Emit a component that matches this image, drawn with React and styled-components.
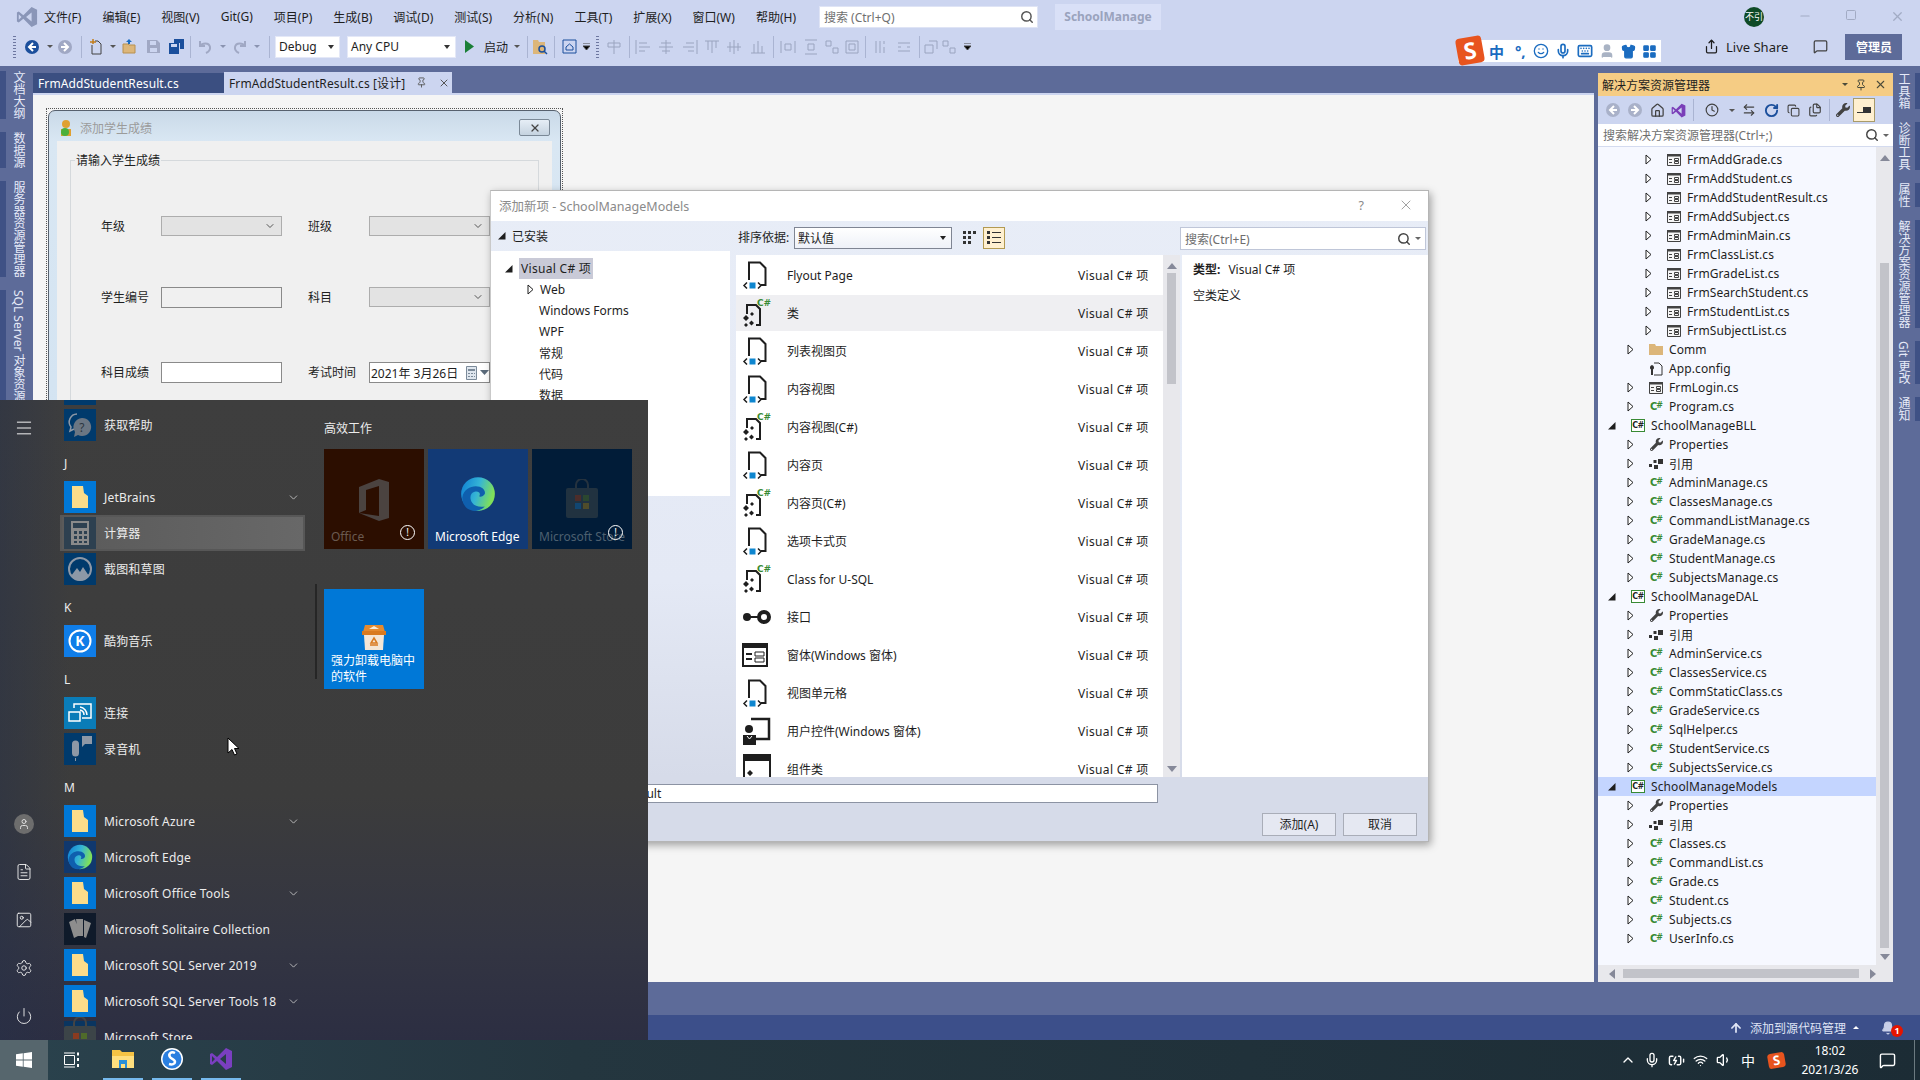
import React from 'react';
import styled, { createGlobalStyle } from 'styled-components';
import { ChevronDown, Search, Smile, Mic, Keyboard, Shirt, LayoutGrid, User, Home, RotateCw, Copy, Files, Clock, ArrowLeftRight, Share, MessageSquare, Menu, FileText, Image, Settings, Power, Volume1, Wifi, BatteryCharging, ChevronUp, Bell, ArrowUp, Pin, X, Minus, Square } from 'lucide-react';
import { FaWrench } from 'react-icons/fa';

const FONT = '"Noto Sans", "Noto Sans CJK SC", sans-serif';

const GlobalStyle = createGlobalStyle`
    html, body { margin: 0; padding: 0; background: #5d6b99; }
    * { box-sizing: border-box; }
    body { font-family: ${FONT}; font-size: 12px; color: #1e1e1e; }
`;

const Screen = styled.div`
    position: relative;
    width: 1920px;
    height: 1080px;
    overflow: hidden;
    display: flex;
    flex-direction: column;
    background: #5d6b99;
`;

/* top chrome */
const TitleBar = styled.div`
    height: 33px;
    background: #ccd5f0;
    display: flex;
    align-items: center;
    padding-left: 16px;
`;
const VsMark = styled.div`
    width: 28px;
    display: flex;
`;
const MenuItem = styled.span`
    margin-right: 21px;
    color: #1e1e1e;
    white-space: nowrap;
`;
const QuickSearch = styled.div`
    width: 219px;
    height: 22px;
    margin-left: 2px;
    background: #fff;
    border: 1px solid #dfe4f5;
    color: #6f6f6f;
    display: flex;
    align-items: center;
    justify-content: space-between;
    padding: 0 3px 0 4px;
`;
const SolutionBadge = styled.div`
    width: 106px;
    height: 26px;
    margin-left: 17px;
    background: #d9e0f7;
    color: #9aa3bd;
    font-weight: 700;
    display: flex;
    align-items: center;
    justify-content: center;
`;
const Avatar = styled.div`
    width: 20px;
    height: 20px;
    margin-left: 583px;
    border-radius: 50%;
    background: #0e4a26;
    color: #fff;
    font-size: 9px;
    line-height: 20px;
    text-align: center;
`;
const WindowButtons = styled.div`
    margin-left: 34px;
    display: flex;
    gap: 33px;
    color: #a2abc4;
`;
const Toolbar = styled.div`
    height: 33px;
    background: #ccd5f0;
    display: flex;
    align-items: center;
    padding: 0 0 6px 8px;
`;
const Slot = styled.div`
    width: ${(p) => p.$w}px;
    margin-left: ${(p) => p.$ml || 0}px;
    flex: none;
    height: 22px;
    display: flex;
    align-items: center;
    justify-content: center;
    color: ${(p) => p.$color || '#424242'};
`;
const Sep = styled.div`
    width: ${(p) => p.$w || 10}px;
    flex: none;
    height: 22px;
    display: flex;
    justify-content: center;
    &::after {
        content: '';
        width: 1px;
        background: #aab4d2;
    }
`;
const Grip = styled.div`
    width: ${(p) => p.$w || 12}px;
    flex: none;
    height: 22px;
    display: flex;
    justify-content: center;
    &::after {
        content: '';
        width: 3px;
        background: repeating-linear-gradient(180deg, #6d77a0 0 1px, transparent 1px 3px);
    }
`;
const ToolSelect = styled.div`
    width: ${(p) => p.$w}px;
    margin-right: ${(p) => p.$mr || 0}px;
    flex: none;
    height: 22px;
    background: #fff;
    border: 1px solid #e4e8f7;
    display: flex;
    align-items: center;
    justify-content: space-between;
    padding: 0 5px 0 3px;
    &::after {
        content: '';
        border: 3px solid transparent;
        border-top: 4px solid #333;
        border-bottom: 0;
    }
`;
const Caret = styled.span`
    display: inline-block;
    border: 3px solid transparent;
    border-top: 3px solid ${(p) => p.$color || '#555'};
    border-bottom: 0;
    ${(p) => p.$up && 'transform: rotate(180deg);'}
`;
const ImeBar = styled.div`
    width: 205px;
    height: 24px;
    margin: 9px 0 0 481px;
    flex: none;
    position: relative;
    background: #fff;
    border: 1px solid #cdd6ef;
    display: flex;
    align-items: center;
    padding-left: 31px;
    color: #1b6cc0;
    gap: 6px;
`;
const ImeLogo = styled.div`
    position: absolute;
    left: -1px;
    top: -3px;
    width: 26px;
    height: 27px;
    background: #e8541e;
    border-radius: 4px;
    transform: rotate(-10deg);
    color: #fff;
    font-size: 23px;
    font-weight: 700;
    line-height: 26px;
    text-align: center;
`;
const ImeText = styled.span`
    font-size: 15px;
    font-weight: 700;
    width: ${(p) => p.$w || 'auto'};
`;
const LiveShare = styled.div`
    margin-left: 42px;
    display: flex;
    align-items: center;
    gap: 7px;
    color: #1e1e1e;
    font-size: 13px;
    white-space: nowrap;
`;
const AdminButton = styled.div`
    width: 57px;
    height: 26px;
    margin-left: 15px;
    background: #5d6b99;
    color: #fff;
    font-weight: 700;
    display: flex;
    align-items: center;
    justify-content: center;
`;

/* workspace */
const Workspace = styled.div`
    height: 949px;
    display: flex;
`;
const LeftRail = styled.div`
    width: 33px;
    flex: none;
    padding-top: 5px;
    display: flex;
    flex-direction: column;
    gap: 13px;
`;
const RailLabel = styled.div`
    writing-mode: vertical-rl;
    line-height: 12px;
    color: #e6eaf8;
    white-space: nowrap;
    border-left: 6px solid #3f5185;
    padding-left: 6px;
    width: 24px;
`;
const DocColumn = styled.div`
    width: 1561px;
    flex: none;
    height: 916px;
    display: flex;
    flex-direction: column;
`;
const TabStrip = styled.div`
    height: 29px;
    padding-top: 6px;
    border-bottom: 2px solid #ccd5f0;
    display: flex;
    align-items: flex-end;
`;
const DocTab = styled.div`
    height: ${(p) => (p.$active ? 21 : 20)}px;
    width: ${(p) => (p.$active ? 228 : 191)}px;
    background: ${(p) => (p.$active ? '#ccd5f0' : '#3b4f81')};
    color: ${(p) => (p.$active ? '#1e1e1e' : '#fff')};
    display: flex;
    align-items: center;
    padding-left: 5px;
    gap: 11px;
    white-space: nowrap;
    letter-spacing: 0.1px;
`;
const DocArea = styled.div`
    flex: 1;
    position: relative;
    background: #f5f5f5;
`;
const DesignerFrame = styled.div`
    position: absolute;
    left: 13px;
    top: 13px;
    width: 517px;
    height: 520px;
    border: 1px dotted #555;
    padding: 1px;
`;
const FormWindow = styled.div`
    height: 100%;
    border: 1px solid #57616e;
    border-radius: 7px 7px 0 0;
    background: linear-gradient(180deg, #c9d9e8 0, #d9e7f3 30px, #cfe1f1 100%);
    display: flex;
    flex-direction: column;
    padding: 0 8px;
`;
const FormTitle = styled.div`
    height: 30px;
    display: flex;
    align-items: center;
    padding: 3px 0 0 3px;
    gap: 8px;
    color: #9b9b9b;
`;
const FormClose = styled.div`
    width: 31px;
    height: 17px;
    margin-left: auto;
    margin-right: 2px;
    border: 1px solid #7b8997;
    border-radius: 2px;
    background: linear-gradient(180deg, #e6eef6, #c5d3e0);
    display: flex;
    align-items: center;
    justify-content: center;
    color: #444;
`;
const FormClient = styled.div`
    flex: 1;
    background: #f0f0f0;
    padding: 19px 13px 0;
`;
const GroupBox = styled.div`
    position: relative;
    height: 300px;
    border: 1px solid #d5d9dc;
    padding: 55px 0 0 30px;
    display: grid;
    grid-template-columns: 60px 121px 26px 61px 121px;
    grid-template-rows: 71px 75px 21px;
    align-content: start;
`;
const GroupLegend = styled.span`
    position: absolute;
    left: 4px;
    top: -10px;
    padding: 0 1px;
    background: #f0f0f0;
    white-space: nowrap;
`;
const FieldLabel = styled.span`
    line-height: 21px;
    height: 21px;
    white-space: nowrap;
`;
const ComboBox = styled.div`
    height: 20px;
    background: #e3e3e3;
    border: 1px solid #adadad;
    display: flex;
    align-items: center;
    justify-content: flex-end;
    padding-right: 5px;
    color: #555;
`;
const TextBox = styled.div`
    height: 21px;
    background: ${(p) => p.$bg || '#fff'};
    border: 1px solid #8a8a8a;
    display: flex;
    align-items: center;
    white-space: nowrap;
    gap: 8px;
    padding-left: 1px;
`;
const DateButton = styled.span`
    display: flex;
    align-items: center;
    gap: 3px;
`;

/* solution explorer */
const Panel = styled.div`
    width: 295px;
    flex: none;
    height: 909px;
    margin: 7px 0 0 4px;
    display: flex;
    flex-direction: column;
    background: #f6f8ff;
`;
const PanelTitle = styled.div`
    height: 23px;
    background: #f5cc84;
    display: flex;
    align-items: center;
    padding: 0 6px 0 4px;
    color: #1e1e1e;
`;
const PanelTitleButtons = styled.div`
    margin-left: auto;
    display: flex;
    align-items: center;
    gap: 7px;
    color: #4b4b3a;
`;
const PanelTools = styled.div`
    height: 28px;
    background: #ccd5f0;
    display: flex;
    align-items: center;
    padding-left: 5px;
`;
const ActiveTool = styled.div`
    width: 22px;
    height: 24px;
    background: #fff0d0;
    border: 1px solid #a89b6a;
    display: flex;
    align-items: center;
    justify-content: center;
`;
const PanelSearch = styled.div`
    height: 23px;
    background: #fff;
    border-bottom: 1px solid #d4dbef;
    color: #6f6f6f;
    display: flex;
    align-items: center;
    justify-content: space-between;
    padding: 0 4px 0 5px;
`;
const SearchTail = styled.span`
    display: flex;
    align-items: center;
    gap: 4px;
`;
const TreeFrame = styled.div`
    height: 818px;
    display: flex;
`;
const TreeRows = styled.div`
    flex: 1;
    padding-top: 3px;
    overflow: hidden;
`;
const TreeRow = styled.div`
    height: 19px;
    display: flex;
    align-items: center;
    padding-left: ${(p) => 9 + p.$level * 18}px;
    background: ${(p) => (p.$selected ? '#c4d5ff' : 'transparent')};
    color: #1e1e1e;
    white-space: nowrap;
    letter-spacing: 0.1px;
`;
const Expander = styled.span`
    width: 10px;
    flex: none;
    display: flex;
    justify-content: center;
`;
const TreeIcon = styled.span`
    width: 16px;
    margin: 0 5px 0 13px;
    flex: none;
    display: flex;
    justify-content: center;
    align-items: center;
`;
const CsMark = styled.span`
    font-size: 10px;
    font-weight: 700;
    line-height: 10px;
    color: #388a34;
    font-family: "DejaVu Sans", sans-serif;
    letter-spacing: -1px;
    & > i {
        font-style: normal;
        font-size: 8px;
        vertical-align: 2px;
    }
`;
const ProjectMark = styled.span`
    width: 14px;
    height: 13px;
    border: 1px solid #388a34;
    background: #fff;
    color: #222;
    font-size: 8px;
    font-weight: 700;
    line-height: 11px;
    text-align: center;
    font-family: "DejaVu Sans", sans-serif;
    letter-spacing: -0.5px;
`;
const VScroll = styled.div`
    width: 17px;
    flex: none;
    background: #e8e8ec;
    display: flex;
    flex-direction: column;
    align-items: center;
    padding-top: 2px;
`;
const ScrollArrow = styled.div`
    height: 17px;
    flex: none;
    display: flex;
    align-items: center;
    justify-content: center;
    &::after {
        content: '';
        border: 5px solid transparent;
        ${(p) => (p.$down ? 'border-top: 6px solid #868999; border-bottom: 0;' : 'border-bottom: 6px solid #868999; border-top: 0;')}
    }
`;
const ScrollThumb = styled.div`
    width: 9px;
    flex: none;
    margin-top: ${(p) => p.$top}px;
    height: ${(p) => p.$h}px;
    margin-bottom: auto;
    background: #c2c3c9;
`;
const HScroll = styled.div`
    height: 17px;
    flex: none;
    background: #e8e8ec;
    display: flex;
    align-items: center;
    padding-left: 9px;
`;
const HArrow = styled.div`
    width: 8px;
    border: 5px solid transparent;
    ${(p) => (p.$right ? 'border-left: 6px solid #868999; border-right: 0; margin-left: 11px;' : 'border-right: 6px solid #868999; border-left: 0; margin-right: 8px;')}
`;
const HThumb = styled.div`
    width: 236px;
    height: 9px;
    background: #c2c3c9;
`;
const RightRail = styled.div`
    width: 27px;
    flex: none;
    padding-top: 7px;
    display: flex;
    flex-direction: column;
    gap: 13px;
`;
const RightRailLabel = styled(RailLabel)`
    border-left: 0;
    border-right: 5px solid #3f5185;
    padding-left: 4px;
    padding-right: 6px;
    width: 27px;
`;

const StatusBar = styled.div`
    height: 25px;
    background: #3c4f8a;
    color: #dfe4f5;
    display: flex;
    align-items: center;
    justify-content: flex-end;
    padding-right: 18px;
    gap: 7px;
`;
const BellWrap = styled.div`
    position: relative;
    width: 28px;
    margin-left: 8px;
    display: flex;
    justify-content: center;
    color: #c9d0e8;
`;
const BellBadge = styled.span`
    position: absolute;
    left: 17px;
    top: 4px;
    width: 12px;
    height: 12px;
    border-radius: 50%;
    background: #e51400;
    color: #fff;
    font-size: 9px;
    font-weight: 700;
    line-height: 12px;
    text-align: center;
`;

/* taskbar */
const Taskbar = styled.div`
    height: 40px;
    position: relative;
    z-index: 5;
    background: linear-gradient(90deg, #2a424d 0, #24363f 30%, #1c2c35 100%);
    display: flex;
    align-items: stretch;
    color: #fff;
`;
const StartButton = styled.div`
    width: 48px;
    background: #56666d;
    display: flex;
    align-items: center;
    justify-content: center;
`;
const TaskSlot = styled.div`
    width: ${(p) => p.$w || 40}px;
    margin-right: ${(p) => p.$mr || 0}px;
    display: flex;
    align-items: center;
    justify-content: center;
    border-bottom: ${(p) => (p.$open ? '2px solid #76b9ed' : '0')};
`;
const Tray = styled.div`
    margin-left: auto;
    display: flex;
    align-items: center;
`;
const TraySlot = styled.div`
    width: ${(p) => p.$w || 24}px;
    display: flex;
    align-items: center;
    justify-content: center;
    color: #fff;
    font-size: ${(p) => p.$size || 12}px;
`;
const TrayClock = styled.div`
    width: 76px;
    text-align: center;
    line-height: 19px;
    color: #fff;
`;
const ShowDesktop = styled.div`
    width: 14px;
    height: 100%;
    display: flex;
    justify-content: flex-end;
    padding-right: 5px;
    &::after {
        content: '';
        width: 1px;
        background: #6c7a80;
    }
`;
const SogouTray = styled.div`
    width: 17px;
    height: 15px;
    background: #e8541e;
    border-radius: 3px;
    transform: rotate(-10deg);
    color: #fff;
    font-size: 13px;
    font-weight: 700;
    line-height: 15px;
    text-align: center;
`;

/* add item dialog */
const Dialog = styled.div`
    position: absolute;
    left: 490px;
    top: 190px;
    z-index: 2;
    width: 939px;
    height: 652px;
    display: flex;
    flex-direction: column;
    background: linear-gradient(180deg, #e8edf7 0, #e4e9f5 60%, #d6dbe9 90%);
    border: 1px solid #b5b5b5;
    border-left: 1px solid #c9c9c9;
    box-shadow: 2px 3px 8px rgba(0, 0, 0, 0.35);
`;
const DialogTitle = styled.div`
    height: 30px;
    flex: none;
    background: #fff;
    display: flex;
    align-items: center;
    padding: 0 14px 2px 8px;
    color: #8a8a8a;
    font-size: 12.5px;
`;
const DialogClose = styled.div`
    margin-left: auto;
    display: flex;
    align-items: center;
    gap: 34px;
    color: #8a8a8a;
`;
const DialogBody = styled.div`
    height: 556px;
    flex: none;
    display: flex;
`;
const LeftCol = styled.div`
    width: 245px;
    flex: none;
`;
const InstalledHead = styled.div`
    height: 30px;
    display: flex;
    align-items: center;
    padding-left: 7px;
    gap: 6px;
`;
const TemplateTree = styled.div`
    width: 239px;
    height: 245px;
    background: #fff;
    padding-top: 7px;
`;
const TemplateRow = styled.div`
    height: 21px;
    display: flex;
    align-items: center;
    padding-left: ${(p) => p.$pad}px;
    gap: ${(p) => p.$gap || 7}px;
    white-space: nowrap;
`;
const TemplateActive = styled.span`
    height: 21px;
    line-height: 21px;
    padding: 0 2px;
    background: #c9cad7;
    letter-spacing: 0.3px;
`;
const MidCol = styled.div`
    width: 444px;
    flex: none;
    display: flex;
    flex-direction: column;
`;
const SortBar = styled.div`
    height: 34px;
    flex: none;
    display: flex;
    align-items: flex-start;
    padding: 6px 0 0 2px;
`;
const SortLabel = styled.span`
    line-height: 22px;
    width: 56px;
    white-space: nowrap;
`;
const SortSelect = styled.div`
    width: 158px;
    height: 22px;
    background: linear-gradient(180deg, #fff, #eef1f8);
    border: 1px solid #7f8593;
    display: flex;
    align-items: center;
    justify-content: space-between;
    padding: 0 5px 0 3px;
    &::after {
        content: '';
        border: 3px solid transparent;
        border-top: 4px solid #222;
        border-bottom: 0;
    }
`;
const ViewToggle = styled.div`
    width: 22px;
    height: 22px;
    margin-left: ${(p) => p.$ml}px;
    display: flex;
    align-items: center;
    justify-content: center;
    background: ${(p) => (p.$on ? '#fff0d0' : 'transparent')};
    border: ${(p) => (p.$on ? '1px solid #b39a52' : '0')};
`;
const ListWrap = styled.div`
    flex: 1;
    display: flex;
    min-height: 0;
`;
const ItemList = styled.div`
    flex: 1;
    background: #fff;
    overflow: hidden;
    padding: 2px 0 0;
`;
const ItemRow = styled.div`
    height: 36px;
    margin-bottom: 2px;
    flex: none;
    display: flex;
    align-items: center;
    padding-left: 6px;
    background: ${(p) => (p.$active ? '#efeff2' : 'transparent')};
    white-space: nowrap;
`;
const ItemIcon = styled.span`
    width: 30px;
    margin-right: 15px;
    flex: none;
    display: flex;
`;
const ItemKind = styled.span`
    margin-left: auto;
    width: 85px;
    letter-spacing: 0.35px;
`;
const RightCol = styled.div`
    flex: 1;
    display: flex;
    flex-direction: column;
`;
const ItemSearch = styled.div`
    width: 246px;
    height: 23px;
    margin: 6px 0 5px;
    background: #fff;
    border: 1px solid #bfc6d8;
    color: #6d6d6d;
    display: flex;
    align-items: center;
    justify-content: space-between;
    padding: 0 4px;
`;
const DetailPane = styled.div`
    flex: 1;
    background: #fff;
    margin-left: 2px;
    padding: 2px 11px;
    line-height: 26px;
`;
const DetailLabel = styled.b`
    font-weight: 700;
    margin-right: 8px;
`;
const DialogFooter = styled.div`
    flex: 1;
    padding: 7px 11px 0 70px;
    display: flex;
    flex-direction: column;
`;
const NameInput = styled.div`
    width: 597px;
    height: 19px;
    background: #fff;
    border: 1px solid #8c93a3;
    line-height: 17px;
    padding-left: 58px;
`;
const DialogActions = styled.div`
    margin-top: 10px;
    display: flex;
    justify-content: flex-end;
    gap: 7px;
`;
const DialogButton = styled.div`
    width: 74px;
    height: 23px;
    background: #e5e8f2;
    border: 1px solid #a9adb8;
    line-height: 21px;
    text-align: center;
`;

/* start menu */
const StartMenu = styled.div`
    position: absolute;
    left: 0;
    top: 400px;
    z-index: 4;
    width: 648px;
    height: 640px;
    display: flex;
    overflow: hidden;
    color: #ececec;
    background: linear-gradient(90deg, rgba(38, 48, 72, 0.45) 0, rgba(38, 48, 72, 0) 70px),
        linear-gradient(180deg, #3e3e3e 0, #3c3c3c 62%, #333542 85%, #2c2e42 100%);
`;
const MenuRail = styled.div`
    width: 48px;
    flex: none;
    display: flex;
    flex-direction: column;
    justify-content: space-between;
    padding-top: 4px;
`;
const RailGroup = styled.div`
    display: flex;
    flex-direction: column;
`;
const RailButton = styled.div`
    width: 48px;
    height: 48px;
    display: flex;
    align-items: center;
    justify-content: center;
    color: #f2f2f2;
`;
const RailAvatar = styled.div`
    width: 20px;
    height: 20px;
    border-radius: 50%;
    background: #6d6d6d;
    display: flex;
    align-items: center;
    justify-content: center;
    color: #ddd;
`;
const AppList = styled.div`
    width: 245px;
    flex: none;
    margin: -29px 0 0 12px;
`;
const AppHeading = styled.div`
    height: 36px;
    line-height: 36px;
    padding: 3px 0 0 4px;
    font-size: 12px;
`;
const AppRow = styled.div`
    height: 36px;
    display: flex;
    align-items: center;
    padding: 0 5px 0 4px;
    gap: 8px;
    white-space: nowrap;
    letter-spacing: 0.18px;
    background: ${(p) => (p.$active ? 'linear-gradient(90deg, #5a5a5a, #686868)' : 'transparent')};
    box-shadow: ${(p) => (p.$active ? 'inset 0 0 0 2px #575757' : 'none')};
`;
const AppIcon = styled.div`
    width: 32px;
    height: 32px;
    flex: none;
    background: ${(p) => p.$bg};
    display: flex;
    align-items: center;
    justify-content: center;
`;
const AppChevron = styled.span`
    margin-left: auto;
    display: flex;
    color: #cfcfcf;
`;
const TilePane = styled.div`
    position: relative;
    padding: 20px 0 0 19px;
`;
const TileHeading = styled.div`
    height: 18px;
    line-height: 18px;
    margin-bottom: 11px;
`;
const TileGrid = styled.div`
    display: grid;
    grid-template-columns: repeat(3, 100px);
    gap: 4px;
    margin-bottom: 40px;
`;
const Tile = styled.div`
    position: relative;
    width: 100px;
    height: 100px;
    background: ${(p) => p.$bg};
    color: ${(p) => p.$color || '#fff'};
    display: flex;
    flex-direction: column;
    align-items: center;
    padding-top: ${(p) => p.$top || 30}px;
`;
const TileLabel = styled.span`
    position: absolute;
    left: 7px;
    bottom: ${(p) => p.$bottom || 4}px;
    right: 6px;
    line-height: 16px;
    white-space: ${(p) => (p.$wrap ? 'normal' : 'nowrap')};
`;
const TileAlert = styled.span`
    position: absolute;
    right: 9px;
    bottom: 9px;
    width: 15px;
    height: 15px;
    border: 1px solid #fff;
    border-radius: 50%;
    color: #fff;
    font-size: 10px;
    line-height: 13px;
    text-align: center;
`;
const ScrollLine = styled.div`
    position: absolute;
    left: 10px;
    top: 184px;
    width: 2px;
    height: 95px;
    background: #262626;
`;
const Cursor = styled.svg`
    position: absolute;
    left: 227px;
    top: 737px;
    z-index: 6;
`;

/* drawn icons */
const HollowArrow = () => (
    <svg width="7" height="11" viewBox="0 0 7 11"><path d="M1 1l5 4.500L1 10z" fill="#fff" stroke="#1e1e1e" /></svg>
);
const OpenArrow = () => (
    <svg width="8" height="8" viewBox="0 0 8 8"><path d="M0 7.500L7.500 0v7.500z" fill="#1e1e1e" /></svg>
);
const FormGlyph = () => (
    <svg width="14" height="12" viewBox="0 0 14 12">
        <path d="M.5.5h13v11H.5z" fill="#f6f6f6" stroke="#424242" />
        <path d="M0 0h14v2.500H0zM2 5h3v1H2zM2 8h3v1H2z" fill="#424242" />
        <path d="M7.500 4.500h4v2h-4zM7.500 7.500h4v2h-4z" fill="none" stroke="#424242" />
    </svg>
);
const FolderGlyph = () => (
    <svg width="14" height="11" viewBox="0 0 14 11"><path d="M0 0h6l1 2h7v9H0z" fill="#dcb67a" /></svg>
);
const ConfigGlyph = () => (
    <svg width="14" height="14" viewBox="0 0 14 14" fill="none">
        <path d="M5 1h5l3 3v9H5" stroke="#333" />
        <path d="M3 3a2.500 2.500 0 0 0-1 4.500V13h2V7.500A2.500 2.500 0 0 0 3 3z" fill="#333" />
    </svg>
);
const RefGlyph = () => (
    <svg width="14" height="10" viewBox="0 0 14 10" fill="#333">
        <path d="M0 5h3v3H0zM5 6h4v4H5zM4.500 1h3v3h-3zM9 0h5v5H9z" />
    </svg>
);
const TREE_ICONS = {
    form: <FormGlyph />,
    cs: <CsMark>C<i>#</i></CsMark>,
    project: <ProjectMark>C#</ProjectMark>,
    folder: <FolderGlyph />,
    config: <ConfigGlyph />,
    wrench: <FaWrench size={13} color="#424242" />,
    ref: <RefGlyph />,
};
const PageGlyph = () => (
    <svg width="28" height="28" viewBox="0 0 28 28" fill="none">
        <path d="M7 19V1.500h11l5.500 5.500v17H19" stroke="#1e1e1e" strokeWidth="2" />
        <path d="M5 21.500l-3 3 3 3M16 21.500l3 3-3 3" stroke="#1e1e1e" strokeWidth="1.500" />
        <rect x="7.500" y="21.500" width="6" height="6" fill="#0e86cf" />
    </svg>
);
const CsPageGlyph = () => (
    <svg width="30" height="30" viewBox="0 0 30 30" fill="none">
        <path d="M5 16V7h9l4 4v16h-4" stroke="#1e1e1e" strokeWidth="2" />
        <path d="M1 20l3-3 3 3-3 3zM7 25l2.500-2.500L12 25l-2.500 2.500zM2 27l2-2 2 2-2 2z" fill="#1e1e1e" />
        <path d="M8 16l2 2 2-2-2-2z" fill="#1e1e1e" />
        <text x="15" y="8" fontSize="9" fontWeight="700" fill="#388a34" fontFamily="DejaVu Sans">C#</text>
    </svg>
);
const InterfaceGlyph = () => (
    <svg width="30" height="14" viewBox="0 0 30 14" fill="none">
        <circle cx="5" cy="7" r="4" fill="#1e1e1e" />
        <path d="M8 7h9" stroke="#1e1e1e" strokeWidth="2" />
        <circle cx="22" cy="7" r="5" stroke="#1e1e1e" strokeWidth="4" />
    </svg>
);
const WinFormGlyph = () => (
    <svg width="26" height="24" viewBox="0 0 26 24" fill="none">
        <path d="M1 1h24v22H1z" stroke="#1e1e1e" strokeWidth="2" />
        <path d="M1 1h24v4H1zM4 10h6v2H4zM4 15h6v2H4z" fill="#1e1e1e" />
        <path d="M13 9h9v4h-9zM13 15h9v4h-9z" stroke="#1e1e1e" />
    </svg>
);
const UserCtlGlyph = () => (
    <svg width="30" height="28" viewBox="0 0 30 28" fill="none">
        <path d="M9 2h18v20H14" stroke="#1e1e1e" strokeWidth="2.500" />
        <circle cx="7" cy="12" r="4" fill="#1e1e1e" />
        <path d="M1 18h13v10H1z" fill="#1e1e1e" />
        <path d="M5 19l2.500 3L10 19" stroke="#fff" />
    </svg>
);
const ComponentGlyph = () => (
    <svg width="30" height="32" viewBox="0 0 30 32" fill="none">
        <path d="M2 2h26v26H2z" stroke="#1e1e1e" strokeWidth="2" />
        <path d="M2 2h26v6H2z" fill="#1e1e1e" />
        <path d="M5 20l3-3 3 3-3 3zM11 26l2-2 2 2-2 2z" fill="#1e1e1e" />
    </svg>
);
const ITEM_ICONS = {
    page: <PageGlyph />,
    cs: <CsPageGlyph />,
    iface: <InterfaceGlyph />,
    form: <WinFormGlyph />,
    user: <UserCtlGlyph />,
    comp: <ComponentGlyph />,
};
const FolderTileGlyph = () => (
    <svg width="18" height="24" viewBox="0 0 18 24"><path d="M1 1h11l1 7 4 3v12H1z" fill="#fbdc8a" /></svg>
);
const CalcGlyph = () => (
    <svg width="18" height="24" viewBox="0 0 18 24" fill="#8a8a8a">
        <path d="M0 0h18v24H0zm2 2v5h14V2zm1 8v3h3v-3zm5 0v3h3v-3zm5 0v3h3v-3zM3 15v3h3v-3zm5 0v3h3v-3zm5 0v3h3v-3zM3 20v2h3v-2zm5 0v2h3v-2zm5 0v2h3v-2z" fillRule="evenodd" />
    </svg>
);
const HelpGlyph = () => (
    <svg width="26" height="26" viewBox="0 0 26 26" fill="none" stroke="#8d98a6" strokeWidth="1.500">
        <path d="M10 2a8 8 0 0 0-6 13l-1 4 4-2" />
        <path d="M15 6a9 9 0 1 1-4 17l-4 2 1-5a9 9 0 0 1 7-14z" fill="#6b7683" stroke="none" />
        <text x="15" y="20" textAnchor="middle" fontSize="12" fill="#2c3640" stroke="none">?</text>
    </svg>
);
const SnipGlyph = () => (
    <svg width="24" height="24" viewBox="0 0 24 24" fill="none">
        <circle cx="12" cy="12" r="11" stroke="#8d98a6" strokeWidth="2" />
        <path d="M3 19l6-8 3 4 3-5 6 9a11 11 0 0 1-18 0z" fill="#8d98a6" />
    </svg>
);
const EdgeGlyph = ({ size = 30, id }) => (
    <svg width={size} height={size} viewBox="0 0 32 32">
        <defs>
            <linearGradient id={id} x1="0" y1="0" x2="1" y2="0.3">
                <stop offset="0" stopColor="#0c7dd4" />
                <stop offset="0.55" stopColor="#35b4d6" />
                <stop offset="1" stopColor="#7fe05a" />
            </linearGradient>
        </defs>
        <circle cx="16" cy="16" r="15" fill={`url(#${id})`} />
        <path d="M2 19c1-7 7-10 12-10 6 0 9 4 8 7-1 2-4 3-5 2 2-3-1-5-4-4-4 1-5 6-2 10 2 3 7 4 11 3-3 3-6 4-9 4-6 0-11-5-11-12z" fill="#0f5fae" />
    </svg>
);
const OfficeGlyph = () => (
    <svg width="30" height="42" viewBox="0 0 30 42"><path d="M0 8L20 0l10 3v36l-10 3L0 34l20 3V7L7 11v20l-7 3z" fill="#4b4340" /></svg>
);
const StoreGlyph = ({ dim }) => (
    <svg width="32" height="40" viewBox="0 0 32 40" opacity={dim ? 0.55 : 1}>
        <path d="M10 10V6a6 6 0 0 1 12 0v4" fill="none" stroke="#444" strokeWidth="2" />
        <rect y="9" width="32" height="30" rx="2" fill="#3c4448" />
        <path d="M9 16h6v6H9z" fill="#8a3b20" /><path d="M17 16h6v6h-6z" fill="#4f6b2a" />
        <path d="M9 24h6v6H9z" fill="#1f6aa0" /><path d="M17 24h6v6h-6z" fill="#8f7420" />
    </svg>
);
const BinGlyph = () => (
    <svg width="26" height="28" viewBox="0 0 26 28">
        <path d="M2 9l2-7h18l2 7z" fill="#e58a2e" />
        <path d="M8 6l5-3 5 3z" fill="#f7ead6" />
        <rect x="1" y="8" width="24" height="4" fill="#d97a1f" />
        <path d="M3 12h20l-1 15H4z" fill="#f4e6d6" />
        <path d="M13 15l3 5h-6zM9 22h8" fill="none" stroke="#d97a1f" strokeWidth="1.500" />
    </svg>
);
const WinLogo = () => (
    <svg width="16" height="16" viewBox="0 0 16 16" fill="#fff">
        <path d="M0 2.300L6.800 1.300V7.600H0zM7.600 1.200L16 0v7.600H7.600zM0 8.400h6.800v6.300L0 13.700zM7.600 8.400H16V16l-8.400-1.200z" />
    </svg>
);
const VsLogo = ({ size = 24, color = '#68217a' }) => (
    <svg width={size} height={size} viewBox="0 0 24 24">
        <path d="M17 1l6 3v16l-6 3-9-9-5 4-2-1V7l2-1 5 4zM3 9v6l3-3zm14-2l-6 5 6 5z" fill={color} fillRule="evenodd" />
    </svg>
);
const ExplorerGlyph = () => (
    <svg width="22" height="18" viewBox="0 0 22 18">
        <path d="M0 0h8l2 2h12v16H0z" fill="#f5c344" />
        <path d="M0 6h22v12H0z" fill="#ffdf7e" />
        <path d="M7 10h8v8h-2v-4H9v4H7z" fill="#2a8fd8" />
    </svg>
);
const SogouBrowser = () => (
    <svg width="22" height="22" viewBox="0 0 22 22">
        <circle cx="11" cy="11" r="11" fill="#fff" />
        <circle cx="11" cy="11" r="9.500" fill="#2b7fe0" />
        <path d="M14 5c-4-2-7 1-5 4 1 2 5 2 5 5 0 2-3 3-6 2" fill="none" stroke="#fff" strokeWidth="2.500" />
    </svg>
);
const TaskViewGlyph = () => (
    <svg width="16" height="16" viewBox="0 0 16 16" fill="none" stroke="#fff">
        <path d="M.5 3.500h10v9H.5zM0 1h11M0 15h11" />
        <path d="M14 .5v3M14 6v3M14 12v3" strokeWidth="2" />
    </svg>
);
const AlignGlyph = ({ d }) => (
    <svg width="16" height="16" viewBox="0 0 16 16" fill="none" stroke="#9aa4bf"><path d={d} /></svg>
);
const NewProjectGlyph = () => (
    <svg width="14" height="16" viewBox="0 0 14 16" fill="none">
        <path d="M2 6v9h9V5L8 2H5" stroke="#424242" />
        <path d="M3 0v5M0 3h6" stroke="#c27d1a" strokeWidth="1.500" />
    </svg>
);
const OpenGlyph = () => (
    <svg width="16" height="15" viewBox="0 0 16 15">
        <path d="M1 5h5l1 1h6v8H1z" fill="#dcb67a" stroke="#b8904e" />
        <path d="M7 0l3 3H8v2H6V3H4z" fill="#1b6cc0" />
    </svg>
);
const SaveGlyph = ({ color = '#a0a8c4' }) => (
    <svg width="13" height="13" viewBox="0 0 13 13">
        <path d="M0 0h10l3 3v10H0zM3 1v4h6V1zM3 8v4h7V8z" fill={color} fillRule="evenodd" />
    </svg>
);
const SaveAllGlyph = () => (
    <svg width="15" height="15" viewBox="0 0 15 15">
        <path d="M0 4h10v11H0z" fill="#1b4f9c" />
        <path d="M5 0h10v10h-4V4H5z" fill="#1b4f9c" />
        <path d="M2 5h6v3H2z" fill="#ccd5f0" />
    </svg>
);
const CircleArrow = ({ color, left }) => (
    <svg width="14" height="14" viewBox="0 0 14 14">
        <circle cx="7" cy="7" r="7" fill={color} />
        <path d={left ? 'M8 3L4 7l4 4M4 7h7' : 'M6 3l4 4-4 4M10 7H3'} stroke="#fff" strokeWidth="2" fill="none" />
    </svg>
);
const UndoGlyph = ({ flip }) => (
    <svg width="14" height="14" viewBox="0 0 14 14" fill="none" transform={flip ? 'scale(-1 1)' : undefined}>
        <path d="M2 1v5h5M2 6c2-3 9-4 10 1 .5 3-2 5-4 6" stroke="#a0a8c4" strokeWidth="2" />
    </svg>
);
const BookmarkGlyph = () => (
    <svg width="15" height="16" viewBox="0 0 15 16">
        <path d="M0 1h5l1 2h6v12H0z" fill="#dcb67a" />
        <circle cx="9" cy="10" r="3" fill="none" stroke="#1b4f9c" strokeWidth="1.500" />
        <path d="M11 12l3 3" stroke="#1b4f9c" strokeWidth="1.500" />
    </svg>
);
const CalendarGlyph = () => (
    <svg width="11" height="14" viewBox="0 0 11 14">
        <path d="M.5.5h10v13H.5z" fill="#dfe6ee" stroke="#7b8a99" />
        <path d="M2 3h7v2H2zM2 7h2v1H2zM5 7h2v1H5zM8 7h1v1H8zM2 10h2v1H2zM5 10h2v1H5zM8 10h1v1H8z" fill="#7b8a99" />
    </svg>
);
const DropCaret = () => (
    <svg width="9" height="5" viewBox="0 0 9 5"><path d="M0 0h9L4.500 5z" fill="#5b6b7b" /></svg>
);

const MENUS = ['文件(F)', '编辑(E)', '视图(V)', 'Git(G)', '项目(P)', '生成(B)', '调试(D)', '测试(S)', '分析(N)', '工具(T)', '扩展(X)', '窗口(W)', '帮助(H)'];

const TREE = [
    [2, 'form', 'FrmAddGrade.cs'], [2, 'form', 'FrmAddStudent.cs'], [2, 'form', 'FrmAddStudentResult.cs'], [2, 'form', 'FrmAddSubject.cs'],
    [2, 'form', 'FrmAdminMain.cs'], [2, 'form', 'FrmClassList.cs'], [2, 'form', 'FrmGradeList.cs'], [2, 'form', 'FrmSearchStudent.cs'],
    [2, 'form', 'FrmStudentList.cs'], [2, 'form', 'FrmSubjectList.cs'],
    [1, 'folder', 'Comm'], [1, 'config', 'App.config', 'none'], [1, 'form', 'FrmLogin.cs'], [1, 'cs', 'Program.cs'],
    [0, 'project', 'SchoolManageBLL', 'open'],
    [1, 'wrench', 'Properties'], [1, 'ref', '引用'], [1, 'cs', 'AdminManage.cs'], [1, 'cs', 'ClassesManage.cs'], [1, 'cs', 'CommandListManage.cs'],
    [1, 'cs', 'GradeManage.cs'], [1, 'cs', 'StudentManage.cs'], [1, 'cs', 'SubjectsManage.cs'],
    [0, 'project', 'SchoolManageDAL', 'open'],
    [1, 'wrench', 'Properties'], [1, 'ref', '引用'], [1, 'cs', 'AdminService.cs'], [1, 'cs', 'ClassesService.cs'], [1, 'cs', 'CommStaticClass.cs'],
    [1, 'cs', 'GradeService.cs'], [1, 'cs', 'SqlHelper.cs'], [1, 'cs', 'StudentService.cs'], [1, 'cs', 'SubjectsService.cs'],
    [0, 'project', 'SchoolManageModels', 'open', true],
    [1, 'wrench', 'Properties'], [1, 'ref', '引用'], [1, 'cs', 'Classes.cs'], [1, 'cs', 'CommandList.cs'], [1, 'cs', 'Grade.cs'],
    [1, 'cs', 'Student.cs'], [1, 'cs', 'Subjects.cs'], [1, 'cs', 'UserInfo.cs'],
];

const ITEMS = [
    ['page', 'Flyout Page'], ['cs', '类', true], ['page', '列表视图页'], ['page', '内容视图'], ['cs', '内容视图(C#)'], ['page', '内容页'],
    ['cs', '内容页(C#)'], ['page', '选项卡式页'], ['cs', 'Class for U-SQL'], ['iface', '接口'], ['form', '窗体(Windows 窗体)'],
    ['page', '视图单元格'], ['user', '用户控件(Windows 窗体)'], ['comp', '组件类'],
];

const Folder = () => <AppIcon $bg="#0078d7"><FolderTileGlyph /></AppIcon>;
const APPS = [
    { icon: <AppIcon $bg="#003a6c" /> },
    { icon: <AppIcon $bg="#003a6c"><HelpGlyph /></AppIcon>, name: '获取帮助' },
    { head: 'J' },
    { icon: <Folder />, name: 'JetBrains', more: true },
    { icon: <AppIcon $bg="#2d4050"><CalcGlyph /></AppIcon>, name: '计算器', active: true },
    { icon: <AppIcon $bg="#003a6c"><SnipGlyph /></AppIcon>, name: '截图和草图' },
    { head: 'K' },
    { icon: <AppIcon $bg="#0f7de8"><svg width="24" height="24" viewBox="0 0 24 24"><circle cx="12" cy="12" r="10.500" fill="none" stroke="#fff" strokeWidth="2" /><text x="12" y="17" textAnchor="middle" fontSize="14" fontWeight="700" fill="#fff">K</text></svg></AppIcon>, name: '酷狗音乐' },
    { head: 'L' },
    { icon: <AppIcon $bg="#0a7cb8"><svg width="24" height="20" viewBox="0 0 24 20" fill="none" stroke="#fff" strokeWidth="1.500"><path d="M6 5V1h17v14H14M1 9h11v9H1zM12 4a8 8 0 0 1 7 8M12 7a5 5 0 0 1 4 5" /></svg></AppIcon>, name: '连接' },
    { icon: <AppIcon $bg="#003a6c"><svg width="24" height="26" viewBox="0 0 24 26" fill="#8d98a6"><path d="M14 0h10v8h-7l-3 3zM4 8a3.500 3.500 0 0 1 7 0v9a3.500 3.500 0 0 1-7 0zM7 22h1v3H7z" /></svg></AppIcon>, name: '录音机' },
    { head: 'M' },
    { icon: <Folder />, name: 'Microsoft Azure', more: true },
    { icon: <AppIcon $bg="#10386e"><EdgeGlyph size={26} id="edgeApp" /></AppIcon>, name: 'Microsoft Edge' },
    { icon: <Folder />, name: 'Microsoft Office Tools', more: true },
    { icon: <AppIcon $bg="#0f1a2a"><svg width="26" height="24" viewBox="0 0 26 24" fill="#8d8d8d"><path d="M2 5l6-3 5 16-6 3zM9 2h7v17H11zM17 3l7 3-5 15-2-1z" /></svg></AppIcon>, name: 'Microsoft Solitaire Collection' },
    { icon: <Folder />, name: 'Microsoft SQL Server 2019', more: true },
    { icon: <Folder />, name: 'Microsoft SQL Server Tools 18', more: true },
    { icon: <AppIcon $bg="#0a3560"><StoreGlyph /></AppIcon>, name: 'Microsoft Store' },
];

const TOOL_GRAY = [
    [24, 'M8 1v14M2 4h12v4H2z'], 'sep',
    [22, 'M1 1v14M4 4h8M4 8h11M4 12h6'], [24, 'M8 1v14M3 4h10M1 8h14M4 12h8'], [24, 'M15 1v14M4 4h8M1 8h11M6 12h6'],
    [20, 'M1 2h14M4 2v9M8 2v12M12 2v7'], [24, 'M1 8h14M4 3v10M8 1v14M12 4v8'], [24, 'M1 14h14M4 14V5M8 14V2M12 14V7'], 'sep',
    [24, 'M1 2v12M15 2v12M5 5h6v6H5z'], [22, 'M2 1h12M2 15h12M5 5h6v6H5z'], [20, 'M2 2h5v5H2zM9 9h5v5H9z'], [20, 'M2 2h12v12H2zM5 5h6v6H5z'], 'sep',
    [24, 'M4 2v12M8 2v12M12 2v3M12 8v6'], [24, 'M2 4h12M2 8h3M11 8h3M2 12h12'], 'sep',
    [18, 'M2 6h8v8H2zM6 2h8v8'], [18, 'M2 2h5v5H2zM9 9h5v5H9z'],
];

const App = () => (
    <Screen>
        <GlobalStyle />
        <TitleBar>
            <VsMark><VsLogo size={22} color="#8a96b8" /></VsMark>
            {MENUS.map((m) => <MenuItem key={m}>{m}</MenuItem>)}
            <QuickSearch>搜索 (Ctrl+Q)<Search size={14} strokeWidth={2.5} color="#555" /></QuickSearch>
            <SolutionBadge>SchoolManage</SolutionBadge>
            <Avatar>不引</Avatar>
            <WindowButtons>
                <Minus size={14} />
                <Square size={12} />
                <X size={15} />
            </WindowButtons>
        </TitleBar>
        <Toolbar>
            <Grip />
            <Slot $w={24}><CircleArrow color="#1b4f9c" left /></Slot>
            <Slot $w={11}><Caret /></Slot>
            <Slot $w={20}><CircleArrow color="#a0a8c4" /></Slot>
            <Sep $w={12} />
            <Slot $w={20}><NewProjectGlyph /></Slot>
            <Slot $w={12}><Caret /></Slot>
            <Slot $w={22}><OpenGlyph /></Slot>
            <Slot $w={24}><SaveGlyph /></Slot>
            <Slot $w={22}><SaveAllGlyph /></Slot>
            <Sep $w={6} />
            <Slot $w={24}><UndoGlyph /></Slot>
            <Slot $w={12}><Caret $color="#8a93b0" /></Slot>
            <Slot $w={22}><UndoGlyph flip /></Slot>
            <Slot $w={12}><Caret $color="#8a93b0" /></Slot>
            <Sep $w={12} />
            <ToolSelect $w={65} $mr={7}>Debug</ToolSelect>
            <ToolSelect $w={109}>Any CPU</ToolSelect>
            <Slot $w={26}><svg width="9" height="13" viewBox="0 0 9 13"><path d="M0 0l9 6.500L0 13z" fill="#1a7f37" /></svg></Slot>
            <Slot $w={28} $color="#1e1e1e">启动</Slot>
            <Slot $w={14}><Caret /></Slot>
            <Sep $w={6} />
            <Slot $w={20}><BookmarkGlyph /></Slot>
            <Sep $w={8} />
            <Slot $w={22}><svg width="15" height="15" viewBox="0 0 15 15" fill="none" stroke="#1b4f9c"><path d="M1 1h13v13H1zM4 8l3.500-3L11 8v3H4z" /></svg></Slot>
            <Slot $w={12}><svg width="7" height="7" viewBox="0 0 7 7"><path d="M0 0h7M0 3l3.500 4L7 3z" stroke="#444" /></svg></Slot>
            <Grip $w={10} />
            {TOOL_GRAY.map((t, i) => (t === 'sep'
                ? <Sep key={i} $w={6} />
                : <Slot key={i} $w={t[0]}><AlignGlyph d={t[1]} /></Slot>))}
            <Slot $w={18}><svg width="7" height="7" viewBox="0 0 7 7"><path d="M0 0h7M0 3l3.500 4L7 3z" stroke="#444" /></svg></Slot>
            <ImeBar>
                <ImeLogo>S</ImeLogo>
                <ImeText $w="20px">中</ImeText>
                <ImeText $w="12px">°,</ImeText>
                <Smile size={16} strokeWidth={2} />
                <Mic size={16} strokeWidth={2.5} />
                <Keyboard size={16} strokeWidth={2.5} />
                <User size={16} color="#a9b3c4" fill="#a9b3c4" />
                <Shirt size={15} fill="#1b6cc0" />
                <LayoutGrid size={15} fill="#1b6cc0" />
            </ImeBar>
            <LiveShare><Share size={15} />Live Share</LiveShare>
            <Slot $w={20} $ml={22}><MessageSquare size={15} /></Slot>
            <AdminButton>管理员</AdminButton>
        </Toolbar>
        <Workspace>
            <LeftRail>
                <RailLabel>文档大纲</RailLabel>
                <RailLabel>数据源</RailLabel>
                <RailLabel>服务器资源管理器</RailLabel>
                <RailLabel>SQL Server 对象资源管理器</RailLabel>
            </LeftRail>
            <DocColumn>
                <TabStrip>
                    <DocTab>FrmAddStudentResult.cs</DocTab>
                    <DocTab $active>
                        FrmAddStudentResult.cs [设计]
                        <Pin size={11} color="#555" />
                        <X size={12} color="#555" />
                    </DocTab>
                </TabStrip>
                <DocArea>
                    <DesignerFrame>
                        <FormWindow>
                            <FormTitle>
                                <svg width="12" height="16" viewBox="0 0 12 16"><circle cx="6" cy="4" r="4" fill="#e0a030" /><path d="M1 9h10v7H1z" fill="#e0a030" /><circle cx="5" cy="12" r="4" fill="#4caf3c" /></svg>
                                添加学生成绩
                                <FormClose><X size={12} strokeWidth={2.5} /></FormClose>
                            </FormTitle>
                            <FormClient>
                                <GroupBox>
                                    <GroupLegend>请输入学生成绩</GroupLegend>
                                    <FieldLabel>年级</FieldLabel>
                                    <ComboBox><ChevronDown size={12} /></ComboBox>
                                    <span />
                                    <FieldLabel>班级</FieldLabel>
                                    <ComboBox><ChevronDown size={12} /></ComboBox>
                                    <FieldLabel>学生编号</FieldLabel>
                                    <TextBox $bg="#f0f0f0" />
                                    <span />
                                    <FieldLabel>科目</FieldLabel>
                                    <ComboBox><ChevronDown size={12} /></ComboBox>
                                    <FieldLabel>科目成绩</FieldLabel>
                                    <TextBox />
                                    <span />
                                    <FieldLabel>考试时间</FieldLabel>
                                    <TextBox>
                                        2021年 3月26日
                                        <DateButton><CalendarGlyph /><DropCaret /></DateButton>
                                    </TextBox>
                                </GroupBox>
                            </FormClient>
                        </FormWindow>
                    </DesignerFrame>
                </DocArea>
            </DocColumn>
            <Panel>
                <PanelTitle>
                    解决方案资源管理器
                    <PanelTitleButtons>
                        <Caret $color="#4b4b3a" />
                        <Pin size={12} />
                        <X size={13} />
                    </PanelTitleButtons>
                </PanelTitle>
                <PanelTools>
                    <Slot $w={20}><CircleArrow color="#a9b1c9" left /></Slot>
                    <Slot $w={24}><CircleArrow color="#a9b1c9" /></Slot>
                    <Slot $w={20}><Home size={15} /></Slot>
                    <Slot $w={22}><VsLogo size={15} color="#7a3fb8" /></Slot>
                    <Sep $w={8} />
                    <Slot $w={30}><Clock size={14} /></Slot>
                    <Slot $w={10}><Caret /></Slot>
                    <Slot $w={24}><ArrowLeftRight size={14} /></Slot>
                    <Slot $w={20} $color="#1b4f9c"><RotateCw size={15} strokeWidth={3} /></Slot>
                    <Slot $w={24}><Copy size={13} /></Slot>
                    <Slot $w={20}><Files size={14} /></Slot>
                    <Sep $w={8} />
                    <Slot $w={20}><FaWrench size={14} /></Slot>
                    <ActiveTool><svg width="14" height="8" viewBox="0 0 14 8"><path d="M0 6h14v1H0zM6 1h8v5H6z" fill="#333" /></svg></ActiveTool>
                </PanelTools>
                <PanelSearch>
                    搜索解决方案资源管理器(Ctrl+;)
                    <SearchTail><Search size={14} strokeWidth={2.5} color="#444" /><Caret $color="#666" /></SearchTail>
                </PanelSearch>
                <TreeFrame>
                    <TreeRows>
                        {TREE.map(([level, icon, name, state, selected], i) => (
                            <TreeRow key={i} $level={level} $selected={selected}>
                                <Expander>
                                    {state === 'open' ? <OpenArrow /> : state === 'none' ? null : <HollowArrow />}
                                </Expander>
                                <TreeIcon>{TREE_ICONS[icon]}</TreeIcon>
                                {name}
                            </TreeRow>
                        ))}
                    </TreeRows>
                    <VScroll>
                        <ScrollArrow />
                        <ScrollThumb $top={97} $h={685} />
                        <ScrollArrow $down />
                    </VScroll>
                </TreeFrame>
                <HScroll>
                    <HArrow />
                    <HThumb />
                    <HArrow $right />
                </HScroll>
            </Panel>
            <RightRail>
                <RightRailLabel>工具箱</RightRailLabel>
                <RightRailLabel>诊断工具</RightRailLabel>
                <RightRailLabel>属性</RightRailLabel>
                <RightRailLabel>解决方案资源管理器</RightRailLabel>
                <RightRailLabel>Git 更改</RightRailLabel>
                <RightRailLabel>通知</RightRailLabel>
            </RightRail>
        </Workspace>
        <StatusBar>
            <ArrowUp size={14} strokeWidth={3} />
            添加到源代码管理
            <Caret $color="#fff" $up />
            <BellWrap>
                <Bell size={14} fill="#c9d0e8" />
                <BellBadge>1</BellBadge>
            </BellWrap>
        </StatusBar>
        <Taskbar>
            <StartButton><WinLogo /></StartButton>
            <TaskSlot $w={48} $mr={7}><TaskViewGlyph /></TaskSlot>
            <TaskSlot $open $mr={9}><ExplorerGlyph /></TaskSlot>
            <TaskSlot $open $mr={9}><SogouBrowser /></TaskSlot>
            <TaskSlot $open><VsLogo size={24} color="#7a3fc0" /></TaskSlot>
            <Tray>
                <TraySlot><ChevronUp size={16} /></TraySlot>
                <TraySlot><Mic size={16} /></TraySlot>
                <TraySlot><BatteryCharging size={17} /></TraySlot>
                <TraySlot><Wifi size={15} /></TraySlot>
                <TraySlot><Volume1 size={16} /></TraySlot>
                <TraySlot $size={14}>中</TraySlot>
                <TraySlot $w={32}><SogouTray>S</SogouTray></TraySlot>
                <TrayClock>18:02<br />2021/3/26</TrayClock>
                <TraySlot $w={38}><MessageSquare size={17} /></TraySlot>
                <ShowDesktop />
            </Tray>
        </Taskbar>

        <Dialog>
            <DialogTitle>
                添加新项 - SchoolManageModels
                <DialogClose>
                    <span>?</span>
                    <X size={16} strokeWidth={1.2} />
                </DialogClose>
            </DialogTitle>
            <DialogBody>
                <LeftCol>
                    <InstalledHead><OpenArrow />已安装</InstalledHead>
                    <TemplateTree>
                        <TemplateRow $pad={14} $gap={6}><OpenArrow /><TemplateActive>Visual C# 项</TemplateActive></TemplateRow>
                        <TemplateRow $pad={36} $gap={6}><HollowArrow />Web</TemplateRow>
                        <TemplateRow $pad={48}>Windows Forms</TemplateRow>
                        <TemplateRow $pad={48}>WPF</TemplateRow>
                        <TemplateRow $pad={48}>常规</TemplateRow>
                        <TemplateRow $pad={48}>代码</TemplateRow>
                        <TemplateRow $pad={48}>数据</TemplateRow>
                    </TemplateTree>
                </LeftCol>
                <MidCol>
                    <SortBar>
                        <SortLabel>排序依据:</SortLabel>
                        <SortSelect>默认值</SortSelect>
                        <ViewToggle $ml={6}><svg width="16" height="16" viewBox="0 0 16 16" fill="#333"><path d="M2 1h3v3H2zM7 1h3v3H7zM12 1h3v3h-3zM2 6h3v3H2zM7 6h3v3H7zM2 11h3v3H2zM7 11h3v3H7z" /></svg></ViewToggle>
                        <ViewToggle $ml={3} $on><svg width="16" height="16" viewBox="0 0 16 16" fill="#333"><path d="M1 1h3v3H1zM6 2h9v1H6zM1 6h3v3H1zM6 7h9v1H6zM1 11h3v3H1zM6 12h9v1H6z" /></svg></ViewToggle>
                    </SortBar>
                    <ListWrap>
                        <ItemList>
                            {ITEMS.map(([icon, name, active]) => (
                                <ItemRow key={name} $active={active}>
                                    <ItemIcon>{ITEM_ICONS[icon]}</ItemIcon>
                                    {name}
                                    <ItemKind>Visual C# 项</ItemKind>
                                </ItemRow>
                            ))}
                        </ItemList>
                        <VScroll>
                            <ScrollArrow />
                            <ScrollThumb $top={-1} $h={111} />
                            <ScrollArrow $down />
                        </VScroll>
                    </ListWrap>
                </MidCol>
                <RightCol>
                    <ItemSearch>
                        搜索(Ctrl+E)
                        <SearchTail><Search size={14} strokeWidth={2.5} color="#444" /><Caret $color="#666" /></SearchTail>
                    </ItemSearch>
                    <DetailPane>
                        <div><DetailLabel>类型:</DetailLabel>Visual C# 项</div>
                        <div>空类定义</div>
                    </DetailPane>
                </RightCol>
            </DialogBody>
            <DialogFooter>
                <NameInput>Default</NameInput>
                <DialogActions>
                    <DialogButton>添加(A)</DialogButton>
                    <DialogButton>取消</DialogButton>
                </DialogActions>
            </DialogFooter>
        </Dialog>

        <StartMenu>
            <MenuRail>
                <RailButton><Menu size={20} strokeWidth={1.2} /></RailButton>
                <RailGroup>
                    <RailButton><RailAvatar><User size={12} /></RailAvatar></RailButton>
                    <RailButton><FileText size={18} strokeWidth={1.2} /></RailButton>
                    <RailButton><Image size={18} strokeWidth={1.2} /></RailButton>
                    <RailButton><Settings size={18} strokeWidth={1.2} /></RailButton>
                    <RailButton><Power size={18} strokeWidth={1.2} /></RailButton>
                </RailGroup>
            </MenuRail>
            <AppList>
                {APPS.map((a, i) => (a.head
                    ? <AppHeading key={a.head}>{a.head}</AppHeading>
                    : (
                        <AppRow key={i} $active={a.active}>
                            {a.icon}
                            {a.name}
                            {a.more && <AppChevron><ChevronDown size={13} strokeWidth={1.5} /></AppChevron>}
                        </AppRow>
                    )))}
            </AppList>
            <TilePane>
                <ScrollLine />
                <TileHeading>高效工作</TileHeading>
                <TileGrid>
                    <Tile $bg="#2c0e00" $color="#6a5a50">
                        <OfficeGlyph />
                        <TileLabel>Office</TileLabel>
                        <TileAlert>!</TileAlert>
                    </Tile>
                    <Tile $bg="#123a76" $top={27}>
                        <EdgeGlyph size={36} id="edgeTile" />
                        <TileLabel>Microsoft Edge</TileLabel>
                    </Tile>
                    <Tile $bg="#011c38" $color="#4d6070">
                        <StoreGlyph dim />
                        <TileLabel>Microsoft Store</TileLabel>
                        <TileAlert>!</TileAlert>
                    </Tile>
                </TileGrid>
                <TileGrid>
                    <Tile $bg="#0078d7" $top={34}>
                        <BinGlyph />
                        <TileLabel $wrap $bottom={4}>强力卸载电脑中的软件</TileLabel>
                    </Tile>
                </TileGrid>
            </TilePane>
        </StartMenu>
        <Cursor width="13" height="19" viewBox="0 0 13 19"><path d="M1 1v15l4-3.500 2.500 5.500 2.500-1-2.500-5.500H12z" fill="#fff" stroke="#000" /></Cursor>
    </Screen>
);

export default App;
